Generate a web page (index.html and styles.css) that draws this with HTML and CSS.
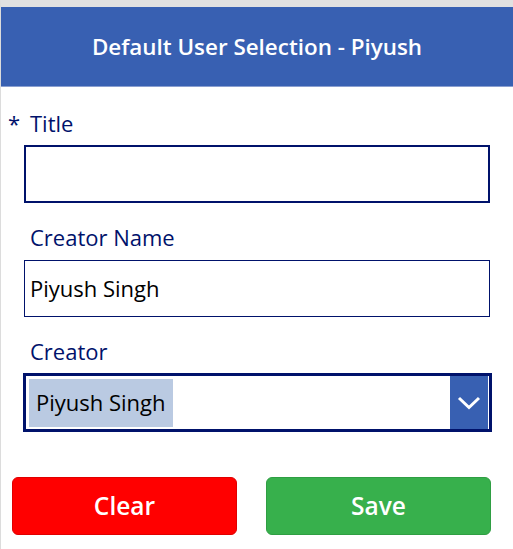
FILE: index.html
```html
<!DOCTYPE html>
<html lang="en">
<head>
<meta charset="utf-8">
<title>Default User Selection - Piyush</title>
<link rel="stylesheet" href="styles.css">
</head>
<body>
<div class="screen">
  <header class="header">Default User Selection - Piyush</header>
  <main class="form">
    <div class="label label-required"><span class="star">*</span><span>Title</span></div>
    <div class="input input-focus"></div>

    <div class="label">Creator Name</div>
    <div class="input">Piyush Singh</div>

    <div class="label">Creator</div>
    <div class="combo">
      <div class="chip">Piyush Singh</div>
      <div class="combo-btn">
        <svg width="24" height="14" viewBox="0 0 24 14" aria-hidden="true">
          <path d="M2 2 L12 11.5 L22 2" fill="none" stroke="#ffffff" stroke-width="3"/>
        </svg>
      </div>
    </div>

    <div class="buttons">
      <button class="btn btn-clear">Clear</button>
      <button class="btn btn-save">Save</button>
    </div>
  </main>
</div>
</body>
</html>
```

FILE: styles.css
```css
html, body {
  margin: 0;
  padding: 0;
  background: #ffffff;
}
body {
  font-family: "Open Sans", "Noto Sans", sans-serif;
}
.screen {
  width: 513px;
  height: 549px;
  box-sizing: border-box;
  border-left: 1px solid #dcdcdc;
  border-top: 7px solid #e1e1e1;
  background: #ffffff;
}
.header {
  height: 80px;
  background: #3860b2;
  color: #ffffff;
  font-weight: 600;
  font-size: 22.4px;
  display: flex;
  align-items: center;
  justify-content: center;
  padding-bottom: 1px;
  box-sizing: border-box;
  border-bottom: 1px solid #8a9fd0;
}
.form {
  display: flex;
  flex-direction: column;
  padding-top: 23px;
}
.label {
  color: #00126b;
  font-size: 22px;
  line-height: 26px;
  padding-left: 29px;
  padding-bottom: 1px;
  margin-top: 21px;
}
.label-required {
  margin-top: 0;
  padding-left: 7px;
  display: flex;
  gap: 11px;
}
.star {
  width: 11px;
}
.input {
  margin: 8px 0 0 23px;
  width: 466px;
  height: 57px;
  box-sizing: border-box;
  border: 1px solid #00126b;
  font-size: 22px;
  color: #000000;
  display: flex;
  align-items: center;
  padding-left: 5px;
  padding-bottom: 2px;
}
.input-focus {
  border-width: 2px;
  height: 58px;
}
.label + .input:not(.input-focus) {
  margin-top: 9px;
}
.combo {
  margin: 8px 0 0 22px;
  width: 469px;
  height: 59px;
  box-sizing: border-box;
  border: 3px solid #00126b;
  display: flex;
  align-items: stretch;
  padding: 3px 1px 2px 3px;
}
.chip {
  background: #bacae2;
  color: #000000;
  font-size: 22px;
  padding: 0 7px;
  display: flex;
  align-items: center;
  padding-bottom: 2px;
}
.combo-btn {
  margin-left: auto;
  margin-top: -3px;
  margin-bottom: -2px;
  width: 38px;
  background: #3860b2;
  display: flex;
  align-items: center;
  justify-content: center;
}
.buttons {
  display: flex;
  gap: 29px;
  margin: 45px 0 0 11px;
}
.btn {
  width: 225px;
  height: 58px;
  border-radius: 6px;
  font-family: "Open Sans", "Noto Sans", sans-serif;
  font-weight: 600;
  font-size: 24.5px;
  color: #ffffff;
  padding: 0 0 2px;
}
.btn-clear {
  background: #ff0000;
  border: 1px solid #e00000;
}
.btn-save {
  background: #37b04c;
  border: 1px solid #2f9e43;
}
```
